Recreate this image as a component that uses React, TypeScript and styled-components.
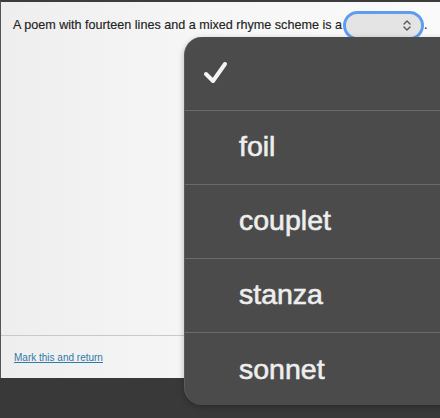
import * as React from 'react';
import styled, { createGlobalStyle } from 'styled-components';

const GlobalStyle = createGlobalStyle`
  html, body {
    margin: 0;
    padding: 0;
    background: #3a3a3a;
  }
  * {
    box-sizing: border-box;
  }
`;

const Screen = styled.div`
  position: relative;
  width: 440px;
  height: 418px;
  overflow: hidden;
  display: flex;
  flex-direction: column;
  background: #393939;
  font-family: 'Liberation Sans', Arial, sans-serif;
`;

const Page = styled.div`
  height: 378px;
  display: flex;
  flex-direction: column;
  border-top: 2px solid #3c3c3c;
  border-left: 1px solid #555;
  background: linear-gradient(90deg, #eeeeee 0%, #f6f6f6 45%, #fafafa 100%);
`;

const Question = styled.div`
  display: flex;
  align-items: center;
  padding: 8px 0 0 12px;
  height: 38px;
  font-size: 12.6px;
  color: #222;
  white-space: nowrap;
  -webkit-text-stroke: 0.15px #222;
`;

const SelectBox = styled.div`
  display: flex;
  align-items: center;
  justify-content: flex-end;
  width: 81px;
  height: 29px;
  margin-left: 1px;
  padding-right: 10px;
  border-radius: 15px;
  border: 3px solid #5e9cee;
  background: #e4e4e4;
  color: #555;
`;

const Spacer = styled.div`
  flex: 1;
`;

const Rule = styled.hr`
  margin: 0;
  border: none;
  border-top: 1px solid #c9c9c9;
`;

const Footer = styled.div`
  height: 42px;
  padding: 11px 0 0 13px;
`;

const ReturnLink = styled.a`
  font-size: 10px;
  color: #2f7aa8;
  text-decoration: underline;
`;

const Menu = styled.ul`
  position: absolute;
  top: 37px;
  left: 184px;
  width: 280px;
  height: 368px;
  margin: 0;
  padding: 0;
  list-style: none;
  background: #4b4b4b;
  border-radius: 18px;
  border-left: 1px solid #5c5c5c;
  box-shadow: 0 2px 6px rgba(0, 0, 0, 0.25);
  overflow: hidden;
`;

const MenuItem = styled.li<{ $last?: boolean }>`
  display: flex;
  align-items: center;
  height: 74px;
  padding-left: 54px;
  padding-bottom: 2px;
  border-bottom: ${({ $last }) => ($last ? 'none' : '1px solid #6b6b6b')};
  color: #eeeeee;
  font-size: 28.5px;
  -webkit-text-stroke: 0.6px #eeeeee;
`;

const CheckItem = styled(MenuItem)`
  padding-left: 18px;
`;

const ChevronIcon = () => (
  <svg width="8" height="11" viewBox="0 0 8 11" fill="none" stroke="#555" strokeWidth="1.4" strokeLinecap="round" strokeLinejoin="round">
    <path d="M1 4 L4 1 L7 4" />
    <path d="M1 7 L4 10 L7 7" />
  </svg>
);

const CheckIcon = () => (
  <svg width="26" height="24" viewBox="0 0 26 24" fill="none" stroke="#f4f4f4" strokeWidth="4" strokeLinecap="round" strokeLinejoin="round">
    <path d="M3 13 L10 20 L22 3" />
  </svg>
);

const options = ['foil', 'couplet', 'stanza', 'sonnet'];

const App = () => (
  <>
    <GlobalStyle />
    <Screen>
      <Page>
        <Question>
          A poem with fourteen lines and a mixed rhyme scheme is a
          <SelectBox>
            <ChevronIcon />
          </SelectBox>
          .
        </Question>
        <Spacer />
        <Rule />
        <Footer>
          <ReturnLink href="#">Mark this and return</ReturnLink>
        </Footer>
      </Page>
      <Menu>
        <CheckItem>
          <CheckIcon />
        </CheckItem>
        {options.map((o, i) => (
          <MenuItem key={o} $last={i === options.length - 1}>
            {o}
          </MenuItem>
        ))}
      </Menu>
    </Screen>
  </>
);

export default App;
